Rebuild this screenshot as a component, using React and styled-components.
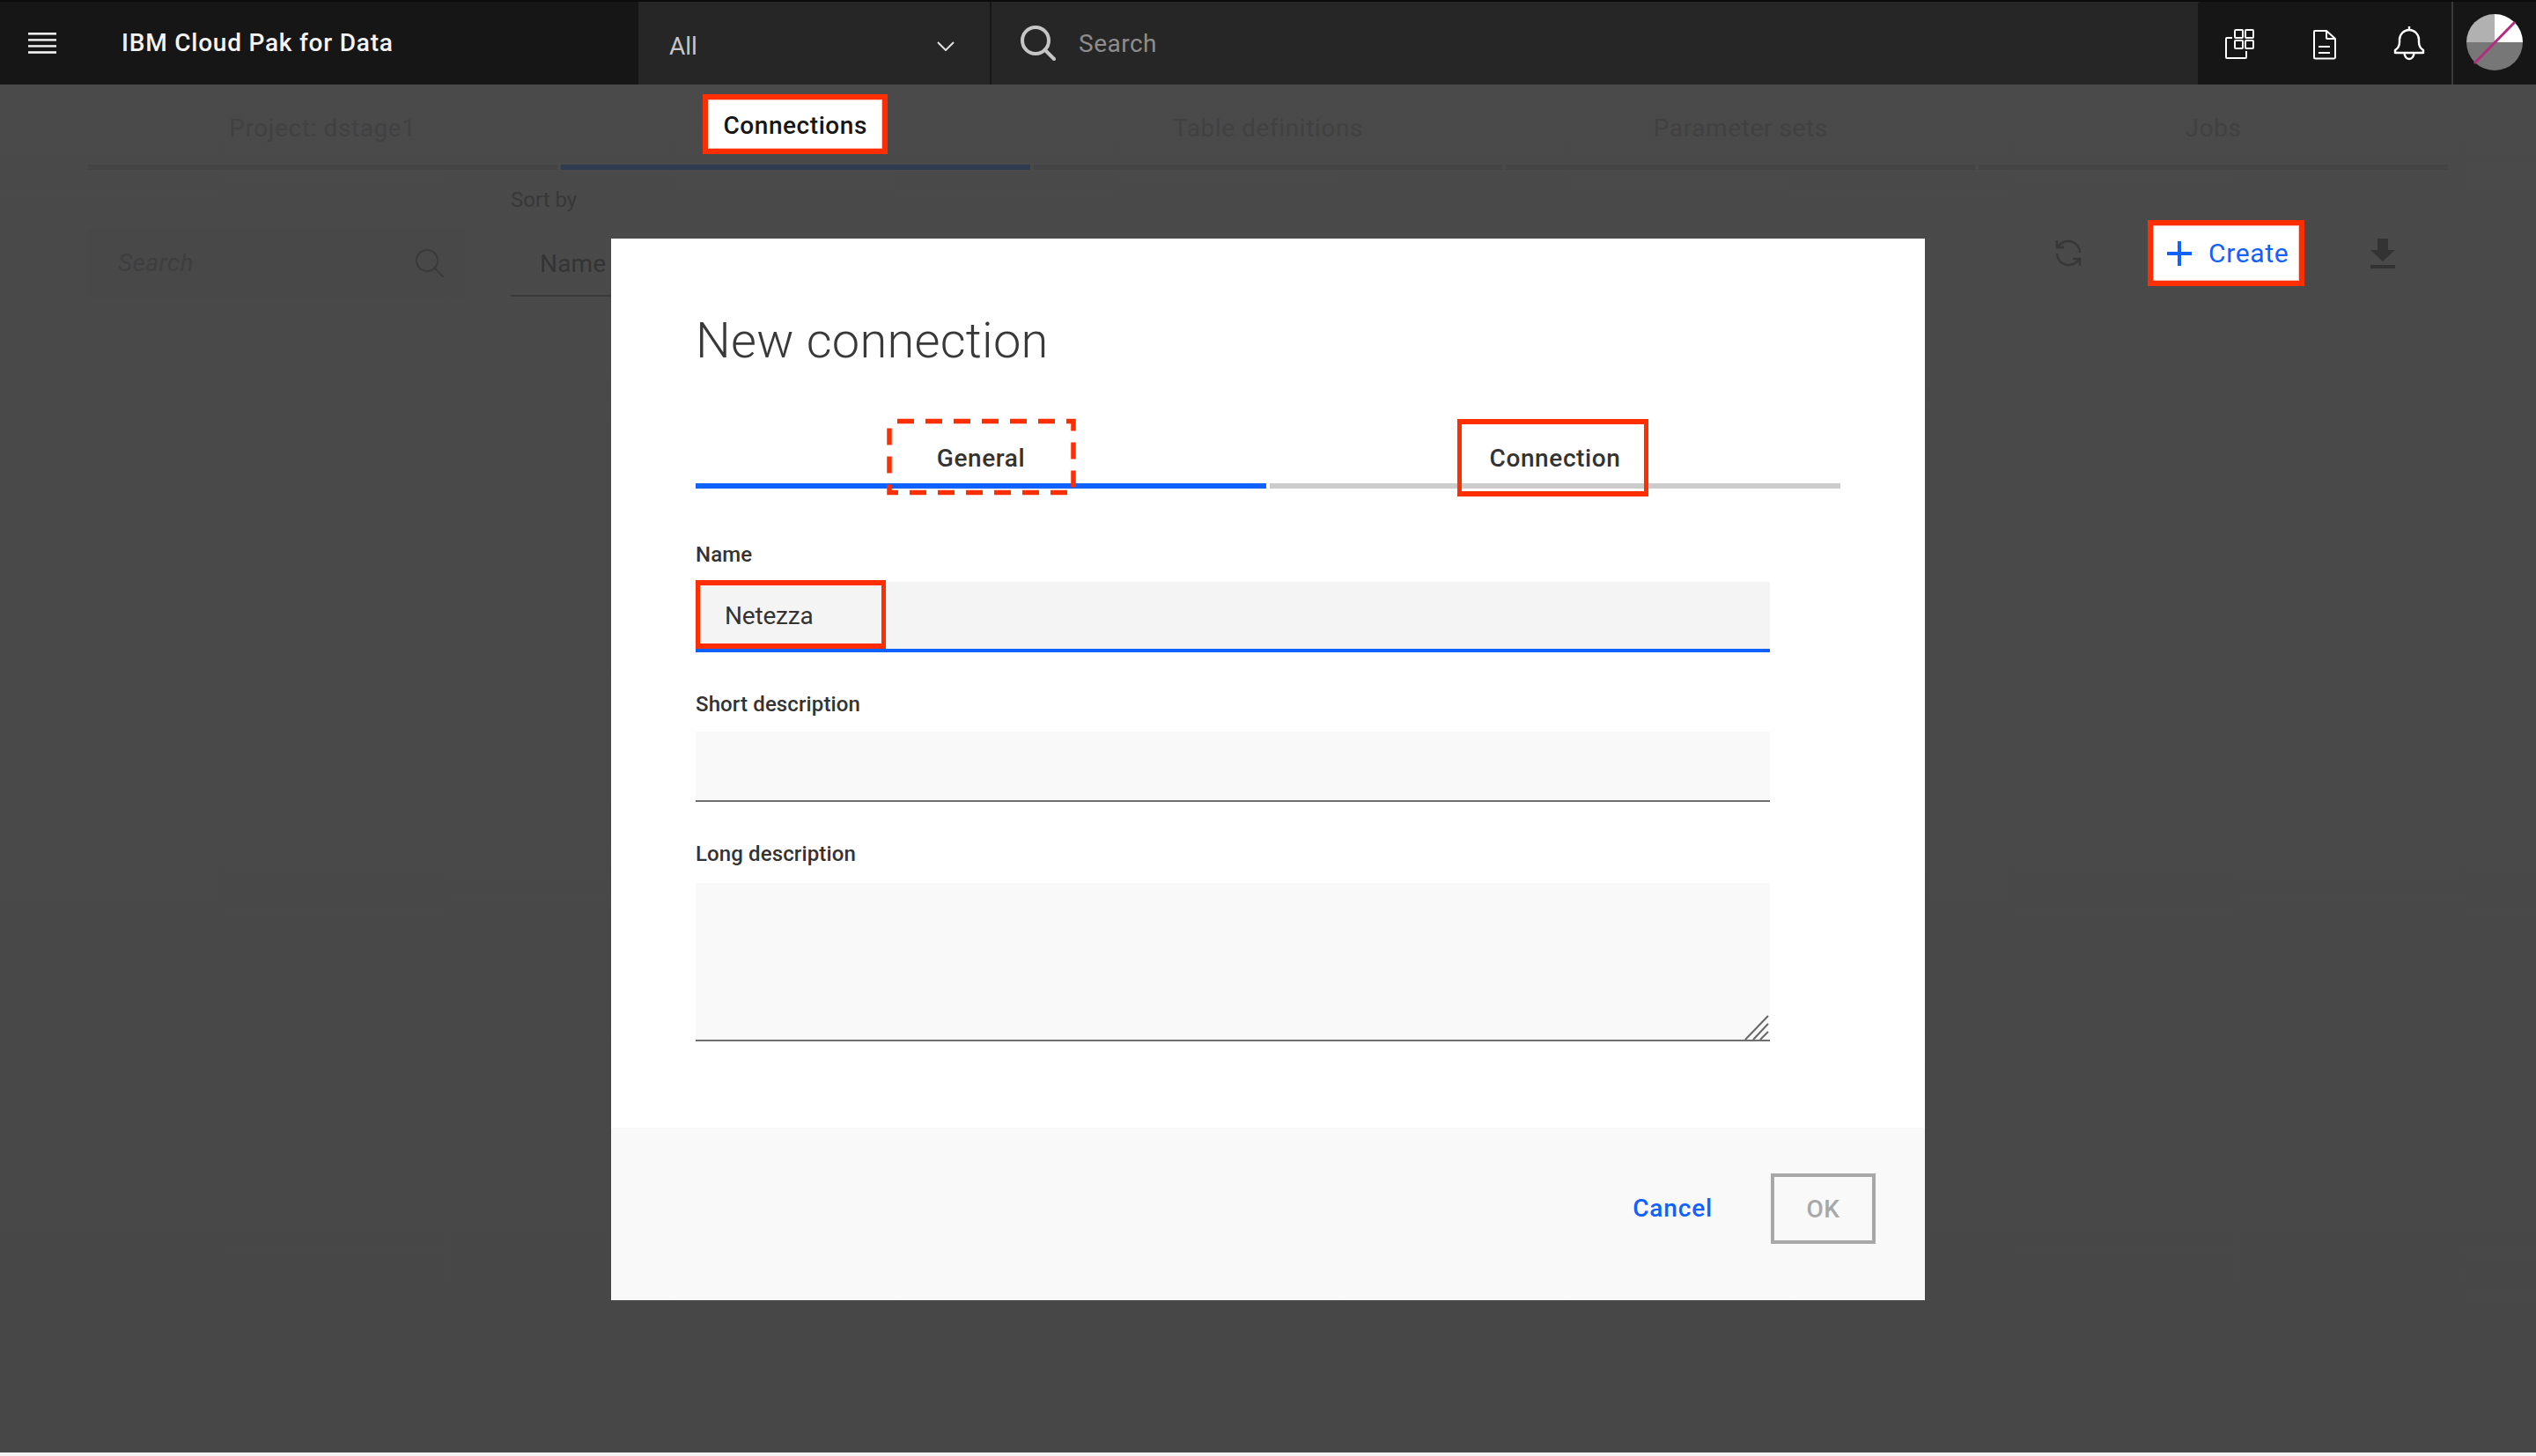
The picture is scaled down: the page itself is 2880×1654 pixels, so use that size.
import React from "react";
import styled, { createGlobalStyle } from "styled-components";

const FONT = `"Roboto", "Noto Sans", "Liberation Sans", sans-serif`;
const RED = "#ff2e00";
const BLUE = "#0f62fe";

const Global = createGlobalStyle`
  html, body { margin: 0; padding: 0; background: #f4f4f4; }
  body { font-family: ${FONT}; }
  #root { width: 2880px; height: 1654px; overflow: hidden; }
  * { box-sizing: border-box; }
`;

const Page = styled.div`
  position: relative;
  width: 2880px;
  height: 1650px;
  background: linear-gradient(#4a4a4a, #474747);
`;

const Header = styled.header`
  display: flex;
  height: 96px;
  border-top: 2px solid #0c0c0c;
  background: #262626;
`;
const Brand = styled.div`
  display: flex;
  align-items: center;
  width: 725px;
  background: #161616;
`;
const MenuButton = styled.div`
  display: flex;
  width: 138px;
  padding-left: 32px;
  align-items: center;
`;
const BrandName = styled.div`
  color: #f4f4f4;
  font-size: 28px;
  font-weight: 500;
  letter-spacing: 0.78px;
  line-height: 36px;
`;
const Scope = styled.div`
  display: flex;
  align-items: center;
  justify-content: space-between;
  width: 401px;
  padding: 7px 40px 0 35px;
  border-right: 2px solid #161616;
  color: #c6c6c6;
  font-size: 28px;
`;
const GlobalSearch = styled.div`
  flex: 1;
  display: flex;
  align-items: center;
  gap: 26px;
  padding-left: 33px;
  color: #8d8d8d;
  font-size: 28px;
  letter-spacing: 0.5px;
`;
const HeaderActions = styled.div`
  display: flex;
  background: #161616;
  border-right: 2px solid #3a3a3a;
  border-radius: 3px 0 0 0;
`;
const HeaderAction = styled.div`
  display: flex;
  align-items: center;
  justify-content: center;
  width: 96px;
  height: 94px;
  padding-top: ${(p) => p.$nudge || 0}px;
`;
const AvatarSlot = styled.div`
  display: flex;
  align-items: center;
  justify-content: center;
  width: 94px;
  padding-bottom: 2px;
  background: #161616;
`;

const Content = styled.main`
  padding: 0 100px;
`;
const TabRow = styled.nav`
  display: grid;
  grid-template-columns: repeat(5, 1fr);
  gap: 4px;
`;
const TabItem = styled.div`
  display: flex;
  flex-direction: column;
  align-items: center;
  justify-content: flex-end;
  height: 97px;
  border-bottom: 6px solid ${(p) => (p.$active ? "#2e3b50" : "#444444")};
`;
const TabName = styled.div`
  margin-bottom: 23px;
  color: #414141;
  font-size: 28px;
  line-height: 36px;
  letter-spacing: 0.6px;
`;
const HighlightTab = styled.div`
  display: flex;
  align-items: center;
  justify-content: center;
  width: 210px;
  height: 68px;
  margin-bottom: 12px;
  padding-top: 3px;
  background: #fff;
  border: 6px solid ${RED};
  box-shadow: inset 0 0 0 1px #ffc4b8;
  color: #161616;
  font-size: 28px;
  font-weight: 500;
  letter-spacing: 0.55px;
`;

const Toolbar = styled.div`
  display: flex;
  align-items: flex-end;
  padding-top: 19px;
`;
const SearchBox = styled.div`
  display: flex;
  align-items: center;
  justify-content: space-between;
  width: 428px;
  height: 77px;
  padding: 0 24px 0 34px;
  background: #484848;
  color: #3e3e3e;
  font-size: 28px;
  font-style: italic;
  letter-spacing: 0.4px;
`;
const SortGroup = styled.div`
  margin-left: 52px;
  width: 420px;
`;
const SortLabel = styled.div`
  margin-bottom: 18px;
  color: #383838;
  font-size: 24px;
  line-height: 30px;
`;
const SortSelect = styled.div`
  display: flex;
  align-items: center;
  height: 77px;
  padding: 3px 0 0 33px;
  border-bottom: 2px solid #3a3a3a;
  color: #343434;
  font-size: 28px;
  letter-spacing: 0.2px;
`;
const ToolActions = styled.div`
  display: flex;
  align-items: center;
  gap: 75px;
  margin-left: auto;
  margin-bottom: 12px;
  padding-right: 60px;
`;
const CreateButton = styled.div`
  display: flex;
  align-items: center;
  gap: 19px;
  width: 178px;
  height: 75px;
  padding: 0 0 0 16px;
  background: #fff;
  border: 6px solid ${RED};
  box-shadow: inset 0 0 0 1px #ffc4b8;
  color: ${BLUE};
  font-size: 30px;
  letter-spacing: 0.65px;
`;

const Scrim = styled.div`
  position: absolute;
  inset: 0;
  display: flex;
  justify-content: center;
  padding-top: 271px;
`;
const Modal = styled.section`
  width: 1492px;
  height: 1206px;
  background: #fff;
  display: flex;
  flex-direction: column;
`;
const ModalBody = styled.div`
  flex: 1;
  padding: 80px 96px 0;
`;
const Title = styled.h2`
  margin: 0 0 77px;
  color: #393939;
  font-size: 56px;
  font-weight: 300;
  line-height: 72px;
  letter-spacing: 0.25px;
`;
const ModalTabs = styled.div`
  display: flex;
  gap: 4px;
`;
const ModalTab = styled.div`
  flex: 1;
  display: flex;
  justify-content: center;
  padding: 3px 0 10px;
  border-bottom: 6px solid ${(p) => (p.$active ? BLUE : "#cccccc")};
`;
const ModalTabLabel = styled.div`
  position: relative;
  color: #333;
  font-size: 28px;
  font-weight: 500;
  line-height: 36px;
  letter-spacing: 0.6px;
`;
const SolidCallout = styled.div`
  position: absolute;
  top: -27px;
  bottom: -25px;
  left: 50%;
  width: 217px;
  margin-left: -111px;
  border: solid ${RED};
  border-width: 6px 5px;
`;
const DashCallout = styled.svg`
  position: absolute;
  top: -27px;
  left: 50%;
  margin-left: -106px;
  overflow: visible;
`;
const Form = styled.div`
  display: flex;
  flex-direction: column;
  gap: 44px;
  width: 1220px;
  margin-top: 60px;
`;
const Field = styled.div`
  display: flex;
  flex-direction: column;
`;
const FieldLabel = styled.div`
  margin-bottom: 16px;
  color: #333;
  font-size: 24px;
  font-weight: 500;
  line-height: 30px;
  letter-spacing: 0.12px;
`;
const TextField = styled.div`
  position: relative;
  display: flex;
  align-items: center;
  height: ${(p) => p.$h}px;
  padding: 0 33px;
  background: ${(p) => (p.$focus ? "#f4f4f4" : "#f9f9f9")};
  border-bottom: ${(p) => (p.$focus ? `4px solid ${BLUE}` : "2px solid #6f6f6f")};
  color: #333;
  font-size: 28px;
  letter-spacing: -0.2px;
`;
const TextArea = styled(TextField)`
  margin-top: 2px;
`;
const NameCallout = styled.div`
  position: absolute;
  left: 0;
  top: -2px;
  width: 216px;
  height: 78px;
  border: solid ${RED};
  border-width: 6px 5px;
`;
const Grip = styled.svg`
  position: absolute;
  right: 1px;
  bottom: 0;
`;
const ModalFooter = styled.footer`
  display: flex;
  justify-content: flex-end;
  gap: 66px;
  height: 196px;
  padding: 52px 56px 0;
  background: #f9f9f9;
`;
const CancelLink = styled.div`
  height: 80px;
  display: flex;
  align-items: center;
  padding-bottom: 2px;
  color: ${BLUE};
  font-size: 28px;
  font-weight: 500;
  letter-spacing: 0.85px;
`;
const OkButton = styled.div`
  display: flex;
  align-items: center;
  justify-content: center;
  width: 119px;
  height: 80px;
  border: 4px solid #a8a8a8;
  color: #a8a8a8;
  font-size: 28px;
  font-weight: 500;
  letter-spacing: 0.5px;
`;

const Hamburger = () => (
  <svg width="32" height="24" viewBox="0 0 32 24">
    <g fill="#f4f4f4">
      <rect y="0" width="32" height="2.6" />
      <rect y="7.2" width="32" height="2.4" />
      <rect y="14.2" width="32" height="2.4" />
      <rect y="21.2" width="32" height="2.6" />
    </g>
  </svg>
);
const Chevron = () => (
  <svg width="20" height="11" viewBox="0 0 20 11">
    <path d="M1 1l9 9 9-9" fill="none" stroke="#e0e0e0" strokeWidth="2" />
  </svg>
);
const Magnifier = ({ size, color, weight, cx, r }) => (
  <svg width={size} height={size} viewBox={`0 0 ${size} ${size}`}>
    <circle cx={cx} cy={cx} r={r} fill="none" stroke={color} strokeWidth={weight} />
    <path
      d={`M${cx + r * 0.7} ${cx + r * 0.7}L${size - weight / 2} ${size - weight / 2}`}
      stroke={color}
      strokeWidth={weight}
      strokeLinecap="round"
    />
  </svg>
);
const AppsIcon = () => (
  <svg width="34" height="34" viewBox="0 0 34 34" fill="none" stroke="#fff" strokeWidth="2">
    <rect x="11" y="1" width="9" height="9" rx="1" />
    <rect x="23" y="1" width="9" height="9" rx="1" />
    <rect x="11" y="13" width="9" height="9" rx="1" />
    <rect x="23" y="13" width="9" height="9" rx="1" />
    <path d="M8 10H2a1 1 0 0 0-1 1v21a1 1 0 0 0 1 1h21a1 1 0 0 0 1-1v-7" strokeLinejoin="round" />
  </svg>
);
const DocIcon = () => (
  <svg width="26" height="34" viewBox="0 0 26 34" fill="none" stroke="#fff" strokeWidth="2">
    <path d="M2 1h13l10 9v21a1.5 1.5 0 0 1-1.5 1.5H2.5A1.5 1.5 0 0 1 1 31V2a1 1 0 0 1 1-1z" strokeLinejoin="round" />
    <path d="M15 1v8a1 1 0 0 0 1 1h9" />
    <path d="M6 19h13M6 26h13" />
  </svg>
);
const BellIcon = () => (
  <svg width="36" height="40" viewBox="0 0 36 40" fill="none" stroke="#fff" strokeWidth="2.4">
    <path d="M18 1v4" />
    <path d="M2 31v-3c3-2 5-5 5-9v-3c0-6 5-11 11-11s11 5 11 11v3c0 4 2 7 5 9v3z" strokeLinejoin="round" />
    <path d="M12.5 31c0 4 2.5 7 5.5 7s5.500-3 5.500-7" />
  </svg>
);
const Avatar = () => (
  <svg width="64" height="64" viewBox="0 0 64 64">
    <defs>
      <clipPath id="avatarDisc">
        <circle cx="32" cy="32" r="32" />
      </clipPath>
    </defs>
    <g clipPath="url(#avatarDisc)">
      <rect width="32" height="32" fill="#b1b1b1" />
      <rect x="32" width="32" height="32" fill="#fff" />
      <rect y="32" width="64" height="32" fill="#777" />
    </g>
    <path d="M55 9L9 56" stroke="#b32c80" strokeWidth="3" />
  </svg>
);
const RefreshIcon = () => (
  <svg width="30" height="31" viewBox="0 0 30 31" fill="none" stroke="#373737" strokeWidth="2.4">
    <path d="M3 8.500C6 4 10 2 15 2c7 0 13 6 13 13" />
    <path d="M27 22.500C24 27 20 29 15 29 8 29 2 23 2 16" />
    <path d="M2 1v8h8" />
    <path d="M28 30v-8h-8" />
  </svg>
);
const PlusIcon = () => (
  <svg width="28" height="28" viewBox="0 0 28 28">
    <path d="M14 0v28M0 14h28" stroke={BLUE} strokeWidth="4" />
  </svg>
);
const DownloadIcon = () => (
  <svg width="28" height="34" viewBox="0 0 28 34" fill="#333">
    <path d="M8 0h12v13h8L14 26 0 13h8z" />
    <rect y="30" width="28" height="4" />
  </svg>
);
const GripIcon = () => (
  <Grip width="28" height="28" viewBox="0 0 28 28" fill="none" stroke="#666" strokeWidth="2">
    <path d="M1 28L27 1M10 28L27 10M18 28l9-9" />
  </Grip>
);

export default function App() {
  return (
    <>
      <Global />
      <Page>
        <Header>
          <Brand>
            <MenuButton>
              <Hamburger />
            </MenuButton>
            <BrandName>IBM Cloud Pak for Data</BrandName>
          </Brand>
          <Scope>
            All
            <Chevron />
          </Scope>
          <GlobalSearch>
            <Magnifier size={40} color="#c6c6c6" weight={4} cx={17} r={15} />
            Search
          </GlobalSearch>
          <HeaderActions>
            <HeaderAction $nudge={2}>
              <AppsIcon />
            </HeaderAction>
            <HeaderAction $nudge={4}>
              <DocIcon />
            </HeaderAction>
            <HeaderAction>
              <BellIcon />
            </HeaderAction>
          </HeaderActions>
          <AvatarSlot>
            <Avatar />
          </AvatarSlot>
        </Header>
        <Content>
          <TabRow>
            <TabItem>
              <TabName>Project: dstage1</TabName>
            </TabItem>
            <TabItem $active>
              <HighlightTab>Connections</HighlightTab>
            </TabItem>
            <TabItem>
              <TabName>Table definitions</TabName>
            </TabItem>
            <TabItem>
              <TabName>Parameter sets</TabName>
            </TabItem>
            <TabItem>
              <TabName>Jobs</TabName>
            </TabItem>
          </TabRow>
          <Toolbar>
            <SearchBox>
              Search
              <Magnifier size={32} color="#3a3a3a" weight={2} cx={13} r={12} />
            </SearchBox>
            <SortGroup>
              <SortLabel>Sort by</SortLabel>
              <SortSelect>Name</SortSelect>
            </SortGroup>
            <ToolActions>
              <RefreshIcon />
              <CreateButton>
                <PlusIcon />
                Create
              </CreateButton>
              <DownloadIcon />
            </ToolActions>
          </Toolbar>
        </Content>
        <Scrim>
          <Modal>
            <ModalBody>
              <Title>New connection</Title>
              <ModalTabs>
                <ModalTab $active>
                  <ModalTabLabel>
                    General
                    <DashCallout width="213" height="86" viewBox="0 0 213 86">
                      <rect
                        x="2"
                        y="2.500"
                        width="209"
                        height="81"
                        fill="none"
                        stroke={RED}
                        strokeWidth="5.500"
                        strokeDasharray="19 13"
                        strokeDashoffset="-9"
                      />
                    </DashCallout>
                  </ModalTabLabel>
                </ModalTab>
                <ModalTab>
                  <ModalTabLabel>
                    Connection
                    <SolidCallout />
                  </ModalTabLabel>
                </ModalTab>
              </ModalTabs>
              <Form>
                <Field>
                  <FieldLabel>Name</FieldLabel>
                  <TextField $focus $h={80}>
                    Netezza
                    <NameCallout />
                  </TextField>
                </Field>
                <Field>
                  <FieldLabel>Short description</FieldLabel>
                  <TextField $h={80} />
                </Field>
                <Field>
                  <FieldLabel>Long description</FieldLabel>
                  <TextArea $h={180}>
                    <GripIcon />
                  </TextArea>
                </Field>
              </Form>
            </ModalBody>
            <ModalFooter>
              <CancelLink>Cancel</CancelLink>
              <OkButton>OK</OkButton>
            </ModalFooter>
          </Modal>
        </Scrim>
      </Page>
    </>
  );
}
